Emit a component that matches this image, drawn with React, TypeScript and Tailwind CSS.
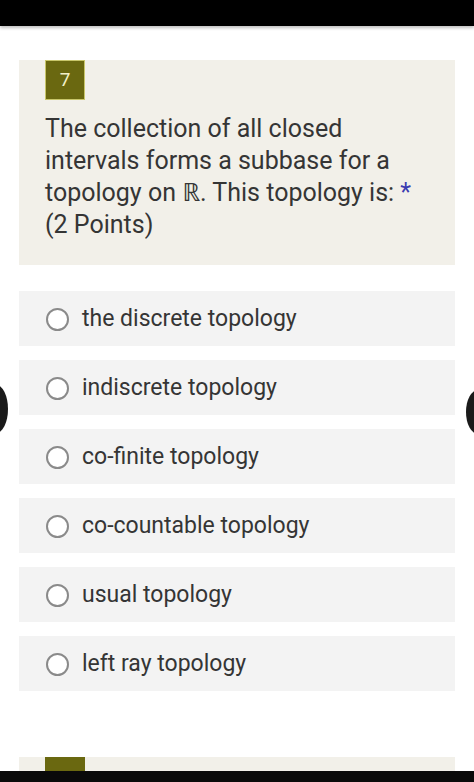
import React from 'react';

const options = [
  'the discrete topology',
  'indiscrete topology',
  'co-finite topology',
  'co-countable topology',
  'usual topology',
  'left ray topology',
];

function Radio() {
  return (
    <span className="w-[23px] h-[23px] rounded-full border-2 border-[#8a8a8a] bg-white shrink-0" />
  );
}

export default function App() {
  return (
    <div
      className="relative w-[474px] h-[782px] overflow-hidden bg-white"
      style={{ fontFamily: 'Roboto, "Noto Sans", sans-serif' }}
    >
      {/* phone status bar */}
      <div className="h-[26px] bg-black shadow-[0_2px_3px_rgba(0,0,0,0.25)]" />

      <div className="px-[19px] pt-[34px] flex flex-col">
        {/* question card */}
        <div className="bg-[#f2f0e9] h-[205px] px-[26px]">
          <div className="w-10 h-10 bg-[#6a6810] border border-[#c8c66a] flex items-center justify-center text-[#f3f0c8] text-[19px]">
            7
          </div>
          <p className="mt-[13px] text-[25px] leading-[32px] text-[#353535] whitespace-nowrap">
            The collection of all closed
            <br />
            intervals forms a subbase for a
            <br />
            topology on <span className="font-light">ℝ</span>. This topology is:{' '}
            <span className="text-[#3b3bb0]">*</span>
            <br />
            (2 Points)
          </p>
        </div>

        {/* answers */}
        <div className="mt-[26px] flex flex-col gap-[14px]">
          {options.map(o => (
            <div key={o} className="h-[55px] bg-[#f3f3f3] flex items-center gap-[13px] pl-[27px] pt-[2px]">
              <Radio />
              <span className="text-[23px] text-[#353535]">{o}</span>
            </div>
          ))}
        </div>

        {/* next question peeking */}
        <div className="mt-[66px] bg-[#f2f0e9] h-[16px] px-[26px]">
          <div className="w-10 h-[16px] bg-[#6a6810]" />
        </div>
      </div>

      {/* bottom bar */}
      <div className="absolute left-0 right-0 bottom-0 h-[11px] bg-[#0a0a0a]" />

      {/* side camera overlays */}
      <div className="absolute left-[-16px] top-[385px] w-[24px] h-[48px] rounded-[50%] bg-[#1a1a1a]" />
      <div className="absolute right-[-16px] top-[390px] w-[24px] h-[44px] rounded-[50%] bg-[#1a1a1a]" />
    </div>
  );
}
